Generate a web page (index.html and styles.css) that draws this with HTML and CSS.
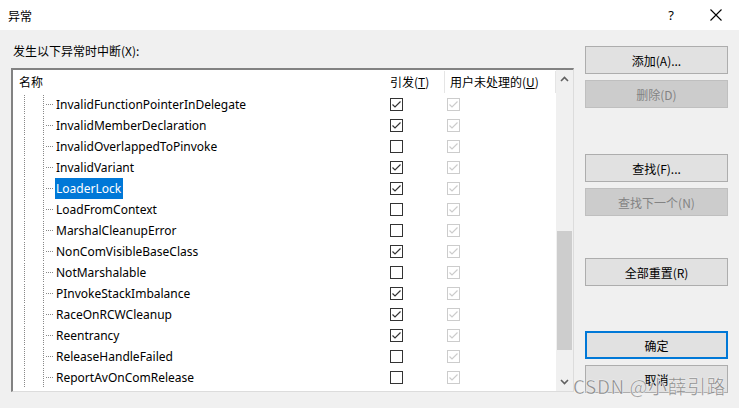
FILE: index.html
```html
<!DOCTYPE html>
<html lang="zh-CN">
<head>
    <meta charset="UTF-8">
    <title>异常</title>
    <link rel="stylesheet" href="styles.css">
</head>
<body>
    <div class="dialog">
        <div class="titlebar">
            <span class="title">异常</span>
            <span class="help">?</span>
            <span class="close">
                <svg width="12" height="12" viewBox="0 0 12 12"><path d="M0.5 0.5 L11.5 11.5 M11.5 0.5 L0.5 11.5" stroke="#000" stroke-width="1.1" fill="none"/></svg>
            </span>
        </div>

        <div class="content">
            <div class="left">
                <div class="caption">发生以下异常时中断(X):</div>
                <div class="listbox">
                    <div class="list">
                        <div class="header">
                            <div class="col-name">名称</div>
                            <div class="col-thrown">引发(<u>T</u>)</div>
                            <div class="col-user">用户未处理的(<u>U</u>)</div>
                        </div>
                        <div class="rows">
                            <div class="row"><span class="tree"></span><span class="name"><span>InvalidFunctionPointerInDelegate</span></span><span class="cell"><i class="box on"></i></span><span class="cell"><i class="box dis"></i></span></div>
                            <div class="row"><span class="tree"></span><span class="name"><span>InvalidMemberDeclaration</span></span><span class="cell"><i class="box on"></i></span><span class="cell"><i class="box dis"></i></span></div>
                            <div class="row"><span class="tree"></span><span class="name"><span>InvalidOverlappedToPinvoke</span></span><span class="cell"><i class="box"></i></span><span class="cell"><i class="box dis"></i></span></div>
                            <div class="row"><span class="tree"></span><span class="name"><span>InvalidVariant</span></span><span class="cell"><i class="box on"></i></span><span class="cell"><i class="box dis"></i></span></div>
                            <div class="row"><span class="tree"></span><span class="name"><span class="selected">LoaderLock</span></span><span class="cell"><i class="box on"></i></span><span class="cell"><i class="box dis"></i></span></div>
                            <div class="row"><span class="tree"></span><span class="name"><span>LoadFromContext</span></span><span class="cell"><i class="box"></i></span><span class="cell"><i class="box dis"></i></span></div>
                            <div class="row"><span class="tree"></span><span class="name"><span>MarshalCleanupError</span></span><span class="cell"><i class="box"></i></span><span class="cell"><i class="box dis"></i></span></div>
                            <div class="row"><span class="tree"></span><span class="name"><span>NonComVisibleBaseClass</span></span><span class="cell"><i class="box on"></i></span><span class="cell"><i class="box dis"></i></span></div>
                            <div class="row"><span class="tree"></span><span class="name"><span>NotMarshalable</span></span><span class="cell"><i class="box"></i></span><span class="cell"><i class="box dis"></i></span></div>
                            <div class="row"><span class="tree"></span><span class="name"><span>PInvokeStackImbalance</span></span><span class="cell"><i class="box on"></i></span><span class="cell"><i class="box dis"></i></span></div>
                            <div class="row"><span class="tree"></span><span class="name"><span>RaceOnRCWCleanup</span></span><span class="cell"><i class="box on"></i></span><span class="cell"><i class="box dis"></i></span></div>
                            <div class="row"><span class="tree"></span><span class="name"><span>Reentrancy</span></span><span class="cell"><i class="box on"></i></span><span class="cell"><i class="box dis"></i></span></div>
                            <div class="row"><span class="tree"></span><span class="name"><span>ReleaseHandleFailed</span></span><span class="cell"><i class="box"></i></span><span class="cell"><i class="box dis"></i></span></div>
                            <div class="row"><span class="tree"></span><span class="name"><span>ReportAvOnComRelease</span></span><span class="cell"><i class="box"></i></span><span class="cell"><i class="box dis"></i></span></div>
                        </div>
                    </div>
                    <div class="scrollbar">
                        <svg class="arrow" width="9" height="6" viewBox="0 0 9 6"><path d="M1 5 L4.5 1.5 L8 5" stroke="#606060" stroke-width="1.6" fill="none"/></svg>
                        <div class="track"><div class="thumb"></div></div>
                        <svg class="arrow" width="9" height="6" viewBox="0 0 9 6"><path d="M1 1 L4.5 4.5 L8 1" stroke="#606060" stroke-width="1.6" fill="none"/></svg>
                    </div>
                </div>
            </div>

            <div class="buttons">
                <button class="btn">添加(A)...</button>
                <button class="btn disabled">删除(D)</button>
                <button class="btn gap-a">查找(F)...</button>
                <button class="btn disabled">查找下一个(N)</button>
                <button class="btn gap-b">全部重置(R)</button>
                <button class="btn default gap-c">确定</button>
                <button class="btn">取消</button>
            </div>
        </div>

        <div class="watermark">CSDN @小薛引路</div>
    </div>
</body>
</html>
```

FILE: styles.css
```css
* {
    margin: 0;
    padding: 0;
    box-sizing: border-box;
}

body {
    width: 739px;
    height: 408px;
    overflow: hidden;
    background: #f0f0f0;
    font-family: "Noto Sans", "Noto Sans CJK SC", sans-serif;
    font-size: 12px;
    color: #000;
}

.dialog {
    position: relative;
    width: 739px;
    height: 408px;
}

.titlebar {
    height: 30px;
    background: #fff;
    display: flex;
    align-items: center;
    padding-left: 8px;
}

.title {
    font-family: "Noto Sans CJK SC", sans-serif;
    font-size: 12px;
    flex: 1;
}

.help {
    width: 44px;
    text-align: center;
    font-size: 13px;
    margin-right: 1px;
}

.close {
    width: 44px;
    height: 30px;
    display: flex;
    align-items: center;
    justify-content: center;
    margin-right: 1px;
}

.content {
    display: flex;
    padding-left: 11px;
}

.left {
    width: 563px;
}

.caption {
    height: 38px;
    padding-top: 13px;
    padding-left: 2px;
    font-family: "Noto Sans CJK SC", sans-serif;
    line-height: 16px;
}

.listbox {
    display: flex;
    height: 324px;
    background: #fff;
    border-top: 2px solid #828282;
    border-left: 2px solid #828282;
    border-right: 1px solid #dcdcdc;
    border-bottom: 1px solid #dcdcdc;
}

.list {
    flex: 1;
    overflow: hidden;
}

.header {
    display: flex;
    height: 24px;
    align-items: center;
    font-family: "Noto Sans CJK SC", sans-serif;
}

.header div {
    height: 22px;
    line-height: 22px;
}

.col-name {
    width: 376px;
    padding-left: 6px;
}

.col-thrown {
    width: 56px;
    padding-left: 1px;
    border-right: 1px solid #e5e5e5;
}

.col-user {
    width: 111px;
    padding-left: 5px;
    border-right: 1px solid #e5e5e5;
}

.header u {
    text-decoration: underline;
}

.row {
    display: flex;
    align-items: center;
    height: 21px;
}

.tree {
    width: 42px;
    height: 21px;
    flex-shrink: 0;
    background:
        linear-gradient(#fff 50%, transparent 50%) 11px 0 / 1px 2px repeat-y,
        linear-gradient(#888, #888) 11px 0 / 1px 21px no-repeat,
        linear-gradient(#fff 50%, transparent 50%) 30px 0 / 1px 2px repeat-y,
        linear-gradient(#888, #888) 30px 0 / 1px 21px no-repeat,
        linear-gradient(90deg, #fff 50%, transparent 50%) 32px 10px / 2px 1px repeat-x,
        linear-gradient(#888, #888) 32px 10px / 9px 1px no-repeat;
}

.name {
    width: 334px;
    flex-shrink: 0;
    line-height: 19px;
}

.name span {
    display: inline-block;
    padding: 1px 2px 1px 1px;
}

.name .selected {
    background: #0078d7;
    color: #fff;
}

.cell {
    width: 57px;
    flex-shrink: 0;
    display: flex;
}

.box {
    display: block;
    width: 13px;
    height: 13px;
    border: 1px solid #333;
    background: #fff;
    margin-left: 1px;
}

.box.on {
    background: #fff url("data:image/svg+xml,%3Csvg xmlns='http://www.w3.org/2000/svg' width='11' height='11'%3E%3Cpath d='M1.5 5.5 L4 8 L9.5 2.5' stroke='%23333' stroke-width='1.2' fill='none'/%3E%3C/svg%3E") center no-repeat;
}

.box.dis {
    border-color: #cccccc;
    background: #fff url("data:image/svg+xml,%3Csvg xmlns='http://www.w3.org/2000/svg' width='11' height='11'%3E%3Cpath d='M1.5 5.5 L4 8 L9.5 2.5' stroke='%23cccccc' stroke-width='1.2' fill='none'/%3E%3C/svg%3E") center no-repeat;
}

.scrollbar {
    width: 17px;
    background: #f0f0f0;
    display: flex;
    flex-direction: column;
    align-items: center;
}

.arrow {
    margin: 6px 0;
}

.track {
    flex: 1;
    width: 100%;
    position: relative;
}

.thumb {
    position: absolute;
    left: 1px;
    right: 1px;
    top: 143px;
    height: 119px;
    background: #cdcdcd;
}

.buttons {
    display: flex;
    flex-direction: column;
    gap: 6px;
    padding-top: 16px;
    margin-left: 11px;
}

.btn {
    width: 143px;
    height: 28px;
    background: #e1e1e1;
    border: 1px solid #adadad;
    font-family: "Noto Sans CJK SC", sans-serif;
    font-size: 12px;
    color: #000;
}

.btn.disabled {
    background: #cccccc;
    border-color: #bfbfbf;
    color: #838383;
}

.btn.default {
    border: 2px solid #0078d7;
}

.gap-a {
    margin-top: 40px;
}

.gap-b {
    margin-top: 36px;
}

.gap-c {
    margin-top: 39px;
}

.watermark {
    position: absolute;
    left: 573px;
    top: 372px;
    font-family: "Noto Sans CJK SC", sans-serif;
    font-size: 19px;
    color: rgba(120, 120, 120, 0.85);
    -webkit-text-stroke: 0.5px rgba(255, 255, 255, 0.6);
    text-shadow: 0 0 1px #fff;
    letter-spacing: 0.5px;
}
```
